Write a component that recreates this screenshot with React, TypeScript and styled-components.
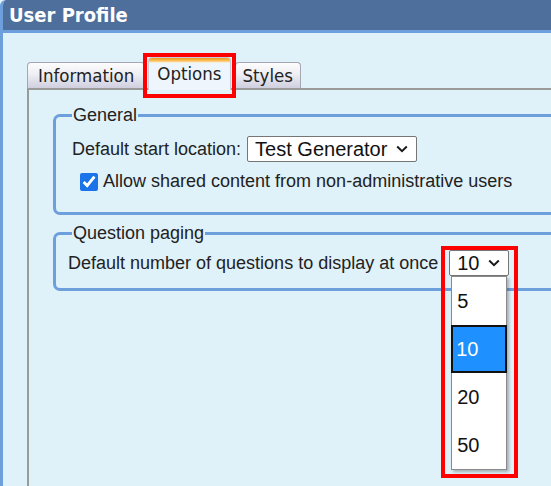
import React from "react";
import styled, { createGlobalStyle } from "styled-components";

const Global = createGlobalStyle`
  html, body { margin: 0; padding: 0; height: 100%; overflow: hidden; background: #dff1f9; }
  #root { height: 100%; }
`;

const Window = styled.div`
  box-sizing: border-box;
  min-height: 100vh;
  display: flex;
  flex-direction: column;
  border-left: 3px solid #6d9fdc;
  border-top-left-radius: 6px;
  background: #dff1f9;
  overflow: hidden;
`;

const TitleBar = styled.div`
  height: 30px;
  line-height: 30px;
  padding-left: 6px;
  background: #4e6e9b;
  border-bottom: 3px solid #6d9fdc;
  color: #ffffff;
  font-family: "DejaVu Sans Condensed", "DejaVu Sans", sans-serif;
  font-stretch: condensed;
  font-weight: bold;
  font-size: 20px;
  white-space: nowrap;
`;

const Content = styled.div`
  flex: 1;
  display: flex;
  flex-direction: column;
  padding: 24px 0 0 24px;
`;

const TabStrip = styled.div`
  display: flex;
  align-items: flex-end;
  position: relative;
  z-index: 2;
`;

const Tab = styled.div<{ $active?: boolean; $gap?: number; $pad: number }>`
  position: relative;
  box-sizing: border-box;
  margin-left: ${(p) => p.$gap ?? 0}px;
  padding: 0 ${(p) => p.$pad}px;
  height: ${(p) => (p.$active ? 33 : 26)}px;
  margin-bottom: ${(p) => (p.$active ? -2 : 0)}px;
  line-height: ${(p) => (p.$active ? 31 : 25)}px;
  font-family: "DejaVu Sans Condensed", "DejaVu Sans", sans-serif;
  font-stretch: condensed;
  font-size: 18.5px;
  color: #222;
  border: 1px solid ${(p) => (p.$active ? "#c3cbd6" : "#a4a6b2")};
  border-bottom: none;
  border-radius: 4px 4px 0 0;
  background: ${(p) =>
    p.$active
      ? "linear-gradient(#f09a20 0px, #fbc35a 3px, #fde3b0 4px, #eef5fd 5px, #eef5fd 100%)"
      : "linear-gradient(#fdfdfd 0%, #eeeef4 45%, #cfcfe0 100%)"};
  white-space: nowrap;
`;

const Panel = styled.div`
  flex: 1;
  margin-right: -40px;
  padding: 0 0 0 24px;
  border-top: 2px solid #9a9a9a;
  border-left: 2px solid #9a9a9a;
`;

const Group = styled.fieldset<{ $top: number; $padTop: number; $padBottom: number }>`
  margin: ${(p) => p.$top}px -80px 0 0;
  padding: ${(p) => p.$padTop}px 0 ${(p) => p.$padBottom}px 16px;
  border: 3px solid #6d9fdc;
  border-radius: 7px;
  min-width: 0;
  font-family: "Liberation Sans", Arial, sans-serif;
  font-size: 18px;
  color: #222;
`;

const Legend = styled.legend`
  padding: 0 1px;
  line-height: 21px;
  font-size: 18px;
`;

const Row = styled.div<{ $shift?: number; $mt?: number }>`
  display: flex;
  align-items: center;
  margin-left: ${(p) => p.$shift ?? 0}px;
  margin-top: ${(p) => p.$mt ?? 0}px;
  white-space: nowrap;
`;

const Label = styled.span<{ $gap: number }>`
  margin-right: ${(p) => p.$gap}px;
  line-height: 21px;
`;

const SelectWrap = styled.div`
  position: relative;
  display: inline-flex;
`;

const SelectBox = styled.div`
  box-sizing: border-box;
  height: 26px;
  display: inline-flex;
  align-items: center;
  gap: 9px;
  padding: 0 8px 0 7px;
  border: 1px solid #767676;
  border-radius: 2px;
  background: #ffffff;
  font-size: 20px;
  color: #111;
`;

const Chevron = styled.svg`
  width: 12px;
  height: 8px;
  flex: none;
`;

const OptionList = styled.ul`
  position: absolute;
  top: 100%;
  left: 2px;
  width: 56px;
  box-sizing: border-box;
  margin: 0;
  padding: 0;
  list-style: none;
  background: #ffffff;
  border: 1px solid #8a8a8a;
  box-shadow: 2px 2px 3px rgba(0, 0, 0, 0.28);
  z-index: 3;
`;

const OptionItem = styled.li<{ $selected?: boolean }>`
  height: 48px;
  display: flex;
  align-items: center;
  padding-left: 5px;
  font-size: 20px;
  color: ${(p) => (p.$selected ? "#ffffff" : "#111")};
  background: ${(p) => (p.$selected ? "#1e90ff" : "transparent")};
  box-shadow: ${(p) => (p.$selected ? "0 0 0 2px #111 inset" : "none")};
  margin: ${(p) => (p.$selected ? "0 -1px" : "0")};
`;

const Check = styled.input`
  width: 18px;
  height: 18px;
  margin: 0 5px 0 8px;
  accent-color: #1a73e8;
`;

const Highlight = styled.div<{ $t: number; $l: number; $r: number; $b: number }>`
  position: absolute;
  top: ${(p) => p.$t}px;
  left: ${(p) => p.$l}px;
  right: ${(p) => p.$r}px;
  bottom: ${(p) => p.$b}px;
  border: 4px solid #ff0000;
  pointer-events: none;
  z-index: 4;
`;

const Caret = () => (
  <Chevron viewBox="0 0 12 8">
    <polyline points="1.2,1.5 6,6.2 10.8,1.5" fill="none" stroke="#1a1a1a" strokeWidth="2" />
  </Chevron>
);

export default function App() {
  return (
    <>
      <Global />
      <Window>
        <TitleBar>User Profile</TitleBar>
        <Content>
          <TabStrip>
            <Tab $pad={10}>Information</Tab>
            <Tab $active $gap={3} $pad={8}>
              Options
              <Highlight $t={-5} $l={-6} $r={-6} $b={-8} />
            </Tab>
            <Tab $gap={4} $pad={7}>Styles</Tab>
          </TabStrip>
          <Panel>
            <Group $top={15} $padTop={10} $padBottom={20}>
              <Legend>General</Legend>
              <Row>
                <Label $gap={6}>Default start location:</Label>
                <SelectWrap>
                  <SelectBox>
                    Test Generator
                    <Caret />
                  </SelectBox>
                </SelectWrap>
              </Row>
              <Row $mt={9}>
                <Check type="checkbox" defaultChecked />
                <Label $gap={0}>Allow shared content from non-administrative users</Label>
              </Row>
            </Group>
            <Group $top={8} $padTop={6} $padBottom={12}>
              <Legend>Question paging</Legend>
              <Row $shift={-4}>
                <Label $gap={11}>Default number of questions to display at once</Label>
                <SelectWrap>
                  <SelectBox>
                    10
                    <Caret />
                  </SelectBox>
                  <OptionList>
                    <OptionItem>5</OptionItem>
                    <OptionItem $selected>10</OptionItem>
                    <OptionItem>20</OptionItem>
                    <OptionItem>50</OptionItem>
                  </OptionList>
                  <Highlight $t={-4} $l={-8} $r={-9} $b={-202} />
                </SelectWrap>
              </Row>
            </Group>
          </Panel>
        </Content>
      </Window>
    </>
  );
}
